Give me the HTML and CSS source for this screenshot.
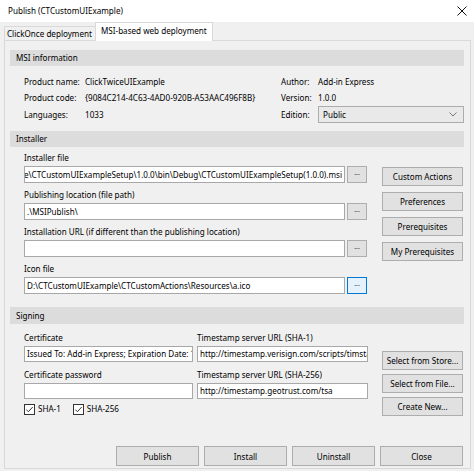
FILE: index.html
```html
<!DOCTYPE html>
<html>
<head>
<meta charset="utf-8">
<link rel="stylesheet" href="styles.css">
</head>
<body>
<div class="window">
  <div class="titlebar">
    <span class="title">Publish (CTCustomUIExample)</span>
    <svg class="close" width="10" height="10" viewBox="0 0 10 10"><path d="M0.5 0.5 L9.5 9.5 M9.5 0.5 L0.5 9.5" stroke="#111" stroke-width="1" fill="none"/></svg>
  </div>
  <div class="tabs">
    <div class="tab">ClickOnce deployment</div>
    <div class="tab active">MSI-based web deployment</div>
  </div>
  <div class="panel">
    <div class="band">MSI information</div>
    <div class="msi">
      <span>Product name:</span><span>ClickTwiceUIExample</span><span>Author:</span><span>Add-in Express</span>
      <span>Product code:</span><span>{9084C214-4C63-4AD0-920B-A53AAC496F8B}</span><span>Version:</span><span>1.0.0</span>
      <span>Languages:</span><span>1033</span><span>Edition:</span>
      <div class="select"><span>Public</span><svg width="8" height="5" viewBox="0 0 8 5"><path d="M0.5 0.5 L4 4 L7.5 0.5" stroke="#777" stroke-width="1" fill="none"/></svg></div>
    </div>
    <div class="band">Installer</div>
    <div class="installer">
      <div class="fields">
        <div class="label">Installer file</div>
        <div class="inrow"><div class="input end"><span>le\CTCustomUIExampleSetup\1.0.0\bin\Debug\CTCustomUIExampleSetup(1.0.0).msi</span></div><div class="dots">...</div></div>
        <div class="label">Publishing location (file path)</div>
        <div class="inrow"><div class="input">.\MSIPublish\</div><div class="dots">...</div></div>
        <div class="label">Installation URL (if different than the publishing location)</div>
        <div class="inrow"><div class="input"></div><div class="dots">...</div></div>
        <div class="label">Icon file</div>
        <div class="inrow"><div class="input">D:\CTCustomUIExample\CTCustomActions\Resources\a.ico</div><div class="dots focus">...</div></div>
      </div>
      <div class="btncol inst">
        <div class="btn">Custom Actions</div>
        <div class="btn">Preferences</div>
        <div class="btn">Prerequisites</div>
        <div class="btn">My Prerequisites</div>
      </div>
    </div>
    <div class="band tall">Signing</div>
    <div class="signing">
      <div class="sigleft">
        <div class="siggrid">
          <div class="label">Certificate</div>
          <div class="label">Timestamp server URL (SHA-1)</div>
          <div class="input s">Issued To: Add-in Express; Expiration Date: 12/31/2039</div>
          <div class="input s">http://timestamp.verisign.com/scripts/timstamp.dll</div>
          <div class="label gap">Certificate password</div>
          <div class="label gap">Timestamp server URL (SHA-256)</div>
          <div class="input s"></div>
          <div class="input s">http://timestamp.geotrust.com/tsa</div>
        </div>
        <div class="checks">
          <span class="check"><svg width="11" height="11" viewBox="0 0 11 11"><rect x="0.5" y="0.5" width="10" height="10" fill="#fff" stroke="#333"/><path d="M2.3 5.6 L4.4 7.7 L8.7 3" stroke="#333" stroke-width="1" fill="none"/></svg>SHA-1</span>
          <span class="check"><svg width="11" height="11" viewBox="0 0 11 11"><rect x="0.5" y="0.5" width="10" height="10" fill="#fff" stroke="#333"/><path d="M2.3 5.6 L4.4 7.7 L8.7 3" stroke="#333" stroke-width="1" fill="none"/></svg>SHA-256</span>
        </div>
      </div>
      <div class="btncol sig">
        <div class="btn">Select from Store...</div>
        <div class="btn">Select from File...</div>
        <div class="btn">Create New...</div>
      </div>
    </div>
    <div class="bottom">
      <div class="btn wide">Publish</div>
      <div class="btn wide">Install</div>
      <div class="btn wide">Uninstall</div>
      <div class="btn wide">Close</div>
    </div>
  </div>
</div>
</body>
</html>
```
FILE: styles.css
```css
* { box-sizing: border-box; }
body {
  margin: 0;
  font-family: "Noto Sans", "Open Sans", sans-serif;
  font-size: 8.1px;
  color: #000;
}
.window {
  width: 474px;
  height: 471px;
  background: #f0f0f0;
  overflow: hidden;
}
.titlebar {
  height: 22px;
  background: #fff;
  display: flex;
  align-items: center;
  justify-content: space-between;
  padding: 0 7px 0 8px;
}
.title { line-height: 16px; }
.tabs {
  height: 18px;
  display: flex;
  align-items: flex-end;
  padding-left: 4px;
}
.tab {
  width: 92px;
  height: 14px;
  line-height: 13px;
  padding-left: 2px;
  border: 1px solid #d9d9d9;
  border-bottom: none;
  background: #f0f0f0;
  white-space: nowrap;
}
.tab.active {
  width: 118px;
  height: 19px;
  line-height: 15px;
  padding-left: 5px;
  margin-bottom: -1px;
  margin-left: -1px;
  background: #fff;
  z-index: 1;
}
.panel {
  margin-left: 4px;
  width: 467px;
  height: 429px;
  border: 1px solid #d9d9d9;
  padding: 9px 6px 0 5px;
}
.band {
  height: 16px;
  line-height: 16px;
  background: #dcdcdc;
  padding-left: 6px;
}
.band.tall { height: 17px; line-height: 17px; }
.msi {
  display: grid;
  grid-template-columns: 61px 196px 37px 146px;
  grid-template-rows: 16px 17px 17px;
  align-items: center;
  padding: 7px 0 8px 14px;
  white-space: nowrap;
}
.select {
  height: 17px;
  border: 1px solid #acacac;
  background: #e9e9e9;
  display: flex;
  align-items: center;
  justify-content: space-between;
  padding: 0 6px 0 4px;
}
.installer {
  display: flex;
  padding: 3px 0 13px 14px;
}
.fields { width: 343px; margin-right: 15px; }
.label {
  height: 16px;
  line-height: 16px;
  white-space: nowrap;
}
.inrow {
  display: flex;
  height: 17px;
  margin-bottom: 4px;
}
.inrow:last-child { margin-bottom: 0; }
.input {
  height: 17px;
  flex: 1;
  background: #fff;
  border: 1px solid #a8a8a8;
  padding: 0 2px;
  line-height: 15px;
  white-space: nowrap;
  overflow: hidden;
}
.input.end {
  display: flex;
  justify-content: flex-end;
}
.input.end span { flex: none; }
.dots {
  width: 20px;
  height: 17px;
  margin-left: 2px;
  border: 1px solid #adadad;
  background: #e1e1e1;
  font-size: 7px;
  line-height: 12px;
  text-align: center;
  color: #333;
}
.dots.focus {
  border-color: #0078d7;
  background: #e5f1fb;
}
.btncol {
  width: 81px;
  display: flex;
  flex-direction: column;
}
.btncol.inst { padding-top: 17px; gap: 6px; }
.btncol.sig { padding-top: 21px; gap: 4px; }
.btn {
  height: 19px;
  border: 1px solid #adadad;
  background: #e1e1e1;
  display: flex;
  align-items: center;
  justify-content: center;
  white-space: nowrap;
}
.signing {
  display: flex;
  padding: 6px 0 0 14px;
}
.sigleft { width: 344px; margin-right: 14px; }
.siggrid {
  display: grid;
  grid-template-columns: 169px 171px;
  column-gap: 4px;
}
.input.s { height: 16px; flex: none; line-height: 14px; }
.label.gap { margin-top: 5px; }
.checks {
  display: flex;
  margin-top: 4px;
  gap: 12px;
}
.check {
  display: flex;
  align-items: center;
  gap: 3px;
  height: 12px;
  line-height: 12px;
}
.check svg { display: block; }
.bottom {
  display: flex;
  justify-content: flex-end;
  gap: 5px;
  margin-top: 30px;
  padding-right: 1px;
}
.btn.wide { width: 83px; height: 20px; }
```
